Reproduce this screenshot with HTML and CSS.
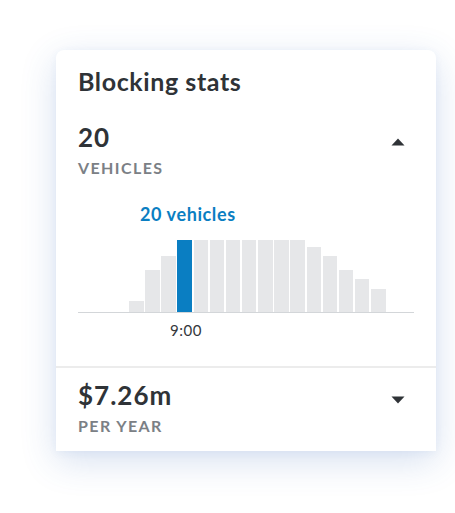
FILE: index.html
```html
<!DOCTYPE html>
<html lang="en">
<head>
<meta charset="utf-8">
<title>Blocking stats</title>
<link rel="stylesheet" href="styles.css">
</head>
<body>
<main class="page">
  <section class="card">
    <div class="section section-top">
      <h2 class="title">Blocking stats</h2>
      <div class="stat-row">
        <div class="stat">
          <div class="stat-value">20</div>
          <div class="stat-label">VEHICLES</div>
        </div>
        <svg class="caret" width="14" height="8" viewBox="0 0 14 8" aria-hidden="true"><path d="M7 0.5 L13.5 7.5 L0.5 7.5 Z" fill="#2f3337"/></svg>
      </div>
      <div class="chart">
        <div class="chart-tooltip">20 vehicles</div>
        <div class="bars">
          <div class="bar" style="height:11px"></div>
          <div class="bar" style="height:42px"></div>
          <div class="bar" style="height:56px"></div>
          <div class="bar bar-active" style="height:72px"></div>
          <div class="bar" style="height:72px"></div>
          <div class="bar" style="height:72px"></div>
          <div class="bar" style="height:72px"></div>
          <div class="bar" style="height:72px"></div>
          <div class="bar" style="height:72px"></div>
          <div class="bar" style="height:72px"></div>
          <div class="bar" style="height:72px"></div>
          <div class="bar" style="height:65px"></div>
          <div class="bar" style="height:56px"></div>
          <div class="bar" style="height:42px"></div>
          <div class="bar" style="height:33px"></div>
          <div class="bar" style="height:23px"></div>
        </div>
        <div class="axis"><span class="axis-label">9:00</span></div>
      </div>
    </div>
    <div class="section section-bottom">
      <div class="stat-row">
        <div class="stat">
          <div class="stat-value">$7.26m</div>
          <div class="stat-label">PER YEAR</div>
        </div>
        <svg class="caret" width="14" height="8" viewBox="0 0 14 8" aria-hidden="true"><path d="M0.5 0.5 L13.5 0.5 L7 7.5 Z" fill="#2f3337"/></svg>
      </div>
    </div>
  </section>
</main>
</body>
</html>
```

FILE: styles.css
```css
html, body {
  margin: 0;
  padding: 0;
  background: #ffffff;
}

body {
  font-family: Lato, "Noto Sans", sans-serif;
  color: #2f3337;
  min-height: 513px;
}

.page {
  padding: 50px 0 62px 56px;
}

.card {
  width: 380px;
  background: #ffffff;
  border-radius: 8px 8px 0 0;
  box-shadow: 0 10px 36px rgba(50, 100, 180, 0.2), 0 2px 8px rgba(50, 100, 180, 0.06);
}

.section {
  padding: 0 22px;
}

.section-top {
  padding-top: 16px;
  padding-bottom: 27px;
  border-bottom: 2px solid #ececec;
}

.section-bottom {
  padding-top: 12px;
  padding-bottom: 15px;
}

.title {
  margin: 0 0 26px;
  font-size: 25px;
  line-height: 30px;
  font-weight: 700;
  letter-spacing: 0.6px;
  color: #2f3337;
}

.stat-row {
  display: flex;
  justify-content: space-between;
  align-items: flex-start;
}

.stat-value {
  font-size: 26px;
  line-height: 30px;
  font-weight: 700;
  letter-spacing: 1px;
  color: #2f3337;
}

.stat-label {
  margin-top: 6px;
  font-size: 16px;
  line-height: 20px;
  font-weight: 700;
  letter-spacing: 1.4px;
  color: #7b8085;
}

.caret {
  display: block;
  margin: 16px 9px 0 0;
}

.chart {
  margin-top: 26px;
}

.chart-tooltip {
  padding-left: 62px;
  font-size: 18px;
  line-height: 20px;
  font-weight: 700;
  letter-spacing: 0.6px;
  color: #0a7ec2;
}

.bars {
  margin-top: 16px;
  height: 72px;
  display: flex;
  align-items: flex-end;
  gap: 1.65px;
  padding-left: 51px;
  border-bottom: 1px solid #d3d6d9;
}

.bar {
  width: 14.5px;
  flex: none;
  background: #e6e7e9;
}

.bar-active {
  background: #0a7ec2;
}

.axis {
  margin-top: 8px;
  padding-left: 92px;
  font-size: 15px;
  line-height: 18px;
  letter-spacing: 0.5px;
  color: #33373b;
}
```
